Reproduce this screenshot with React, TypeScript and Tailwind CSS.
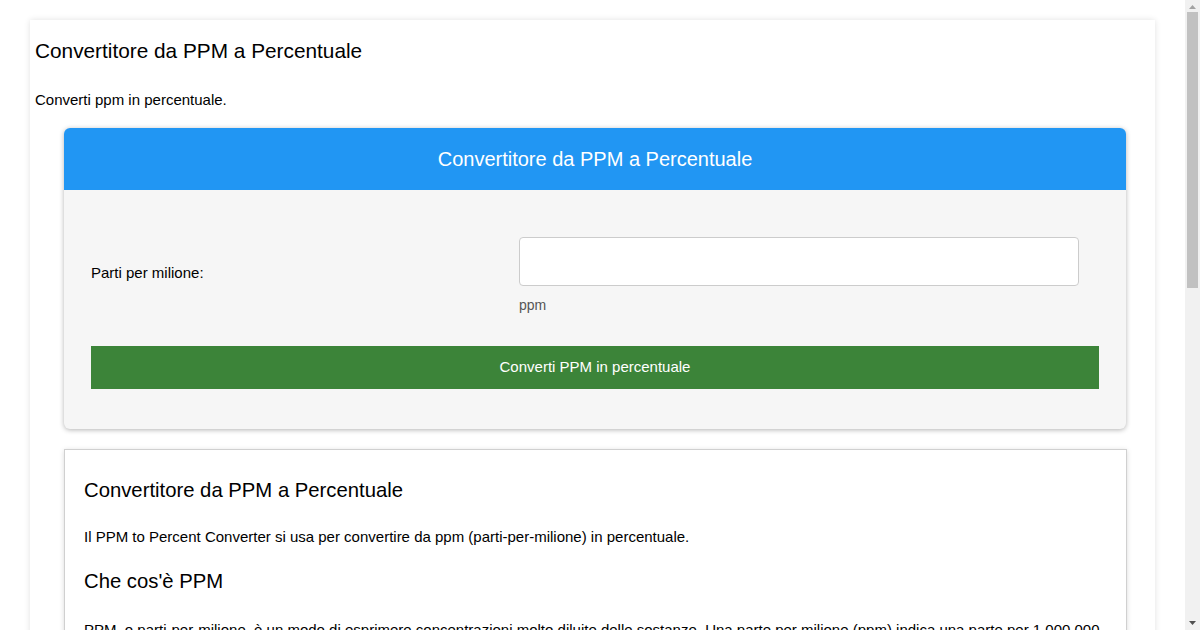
function Scrollbar() {
  return (
    <div className="flex h-full w-[15px] shrink-0 flex-col items-center bg-[#f1f1f1]">
      <svg width="15" height="12" viewBox="0 0 15 12" className="shrink-0">
        <path d="M4 9 L7.5 5 L11 9 Z" fill="#a3a3a3" />
      </svg>
      <div className="h-[276px] w-[11px] bg-[#c1c1c1]" />
      <div className="flex-1" />
      <svg width="15" height="12" viewBox="0 0 15 12" className="shrink-0">
        <path d="M4 3 L11 3 L7.5 7 Z" fill="#505050" />
      </svg>
    </div>
  );
}

export default function App() {
  return (
    <div className="flex h-screen overflow-hidden bg-white font-['Liberation_Sans',Arial,sans-serif] text-black">
      <div className="min-w-0 flex-1 overflow-hidden pt-5">
        <div className="mx-[30px] bg-white px-[5px] pt-[19px] pb-10 shadow-[0_0_6px_rgba(0,0,0,0.12)]">
          <h1 className="text-[20.8px] leading-6">Convertitore da PPM a Percentuale</h1>
          <p className="mt-[28px] text-[15px] leading-[17px]">Converti ppm in percentuale.</p>

          <div className="ml-[29px] mt-5 w-[1062px] overflow-hidden rounded-md bg-[#f6f6f6] shadow-[0_1px_5px_rgba(0,0,0,0.3)]">
            <div className="flex h-[62px] items-center justify-center bg-[#2196f3] text-[20px] text-white">
              Convertitore da PPM a Percentuale
            </div>
            <div className="px-[27px] pt-[47px] pb-10">
              <div className="grid grid-cols-[428px_1fr]">
                <label className="mt-[27px] text-[15px] leading-[17px]">Parti per milione:</label>
                <div>
                  <input
                    type="text"
                    className="h-[49px] w-[560px] rounded border border-[#cccccc] bg-white px-3 text-[15px] outline-none"
                  />
                  <div className="mt-[11px] text-[14px] leading-4 text-[#555555]">ppm</div>
                </div>
              </div>
              <button className="mt-[33px] flex h-[43px] w-full items-center justify-center bg-[#3c8439] text-[15px] text-white">
                Converti PPM in percentuale
              </button>
            </div>
          </div>

          <div className="ml-[29px] mt-5 w-[1063px] border border-[#d0d0d0] bg-white px-[19px] pt-[28px] pb-6 shadow-[0_1px_5px_rgba(0,0,0,0.15)]">
            <h2 className="text-[20.3px] leading-6">Convertitore da PPM a Percentuale</h2>
            <p className="mt-[26px] text-[15px] leading-[18px]">
              Il PPM to Percent Converter si usa per convertire da ppm (parti-per-milione) in percentuale.
            </p>
            <h2 className="mt-[23px] text-[20.3px] leading-6">Che cos'è PPM</h2>
            <p className="mt-[26px] text-[15px] leading-[22px]">
              PPM, o parti-per-milione, è un modo di esprimere concentrazioni molto diluite delle sostanze. Una parte per milione (ppm) indica una parte per 1.000.000 parti, ovvero una parte su un milione.
            </p>
          </div>
        </div>
      </div>
      <Scrollbar />
    </div>
  );
}
